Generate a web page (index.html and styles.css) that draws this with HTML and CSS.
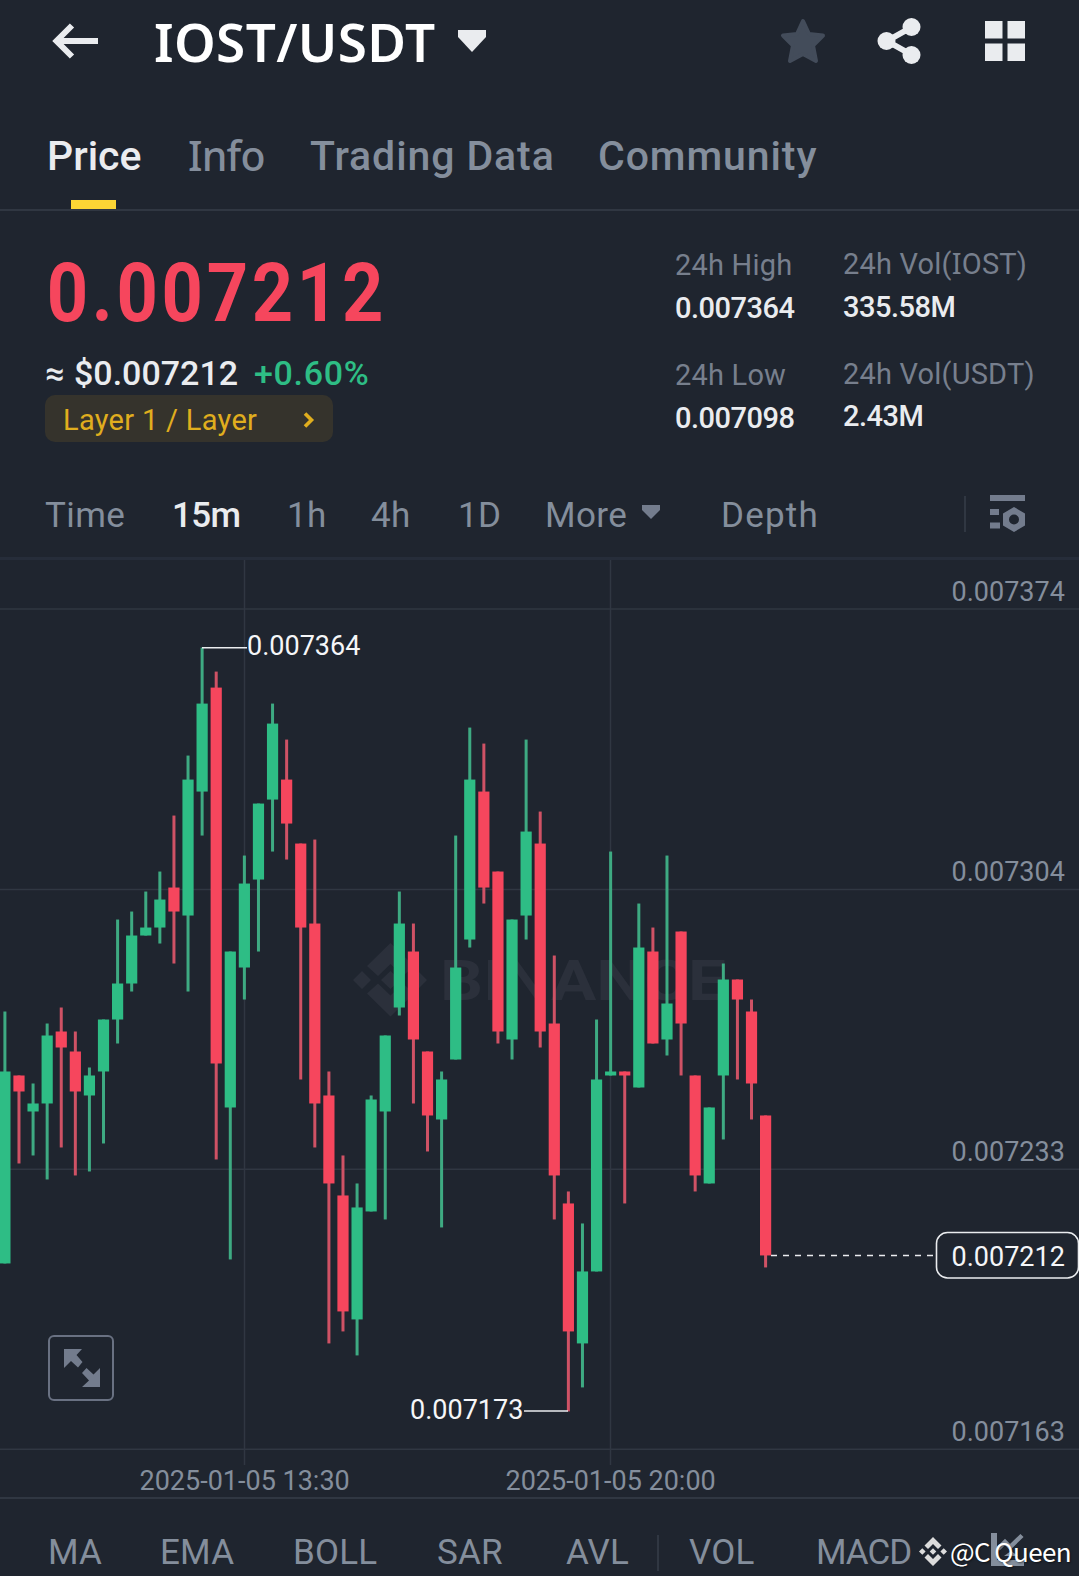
FILE: index.html
```html
<!DOCTYPE html>
<html lang="en">
<head>
    <meta charset="UTF-8">
    <meta name="viewport" content="width=device-width, initial-scale=1.0">
    <title>IOST/USDT</title>
    <link rel="stylesheet" href="styles.css">
</head>
<body>

<header class="topbar">
    <svg class="back" width="46" height="36" viewBox="0 0 46 36">
        <path d="M20 2.500L4.500 18L20 33.500M4.500 18H46" fill="none" stroke="#eaecef" stroke-width="6"/>
    </svg>
    <h1>IOST/USDT</h1>
    <svg class="pair-caret" width="28" height="22" viewBox="0 0 28 22">
        <path d="M0 0H28V7L14 22L0 7Z" fill="#eaecef"/>
    </svg>
    <div class="actions">
        <svg width="46" height="48" viewBox="0 0 46 48">
            <path d="M23 4L29 17L43 18.500L33 28.500L36 44L23 37L10 44L13 28.500L3 18.500L17 17Z" fill="#434c5a" stroke="#434c5a" stroke-width="4" stroke-linejoin="round"/>
        </svg>
        <svg width="44" height="48" viewBox="0 0 44 48">
            <path d="M35 10L10 24L35 38" fill="none" stroke="#eaecef" stroke-width="6"/>
            <circle cx="34.500" cy="10" r="9" fill="#eaecef"/>
            <circle cx="9.500" cy="24" r="9" fill="#eaecef"/>
            <circle cx="34.500" cy="38" r="9" fill="#eaecef"/>
        </svg>
        <svg width="40" height="40" viewBox="0 0 40 40">
            <path d="M0 0H17.500V17.500H0ZM22.500 0H40V17.500H22.500ZM0 22.500H17.500V40H0ZM22.500 22.500H40V40H22.500Z" fill="#eaecef"/>
        </svg>
    </div>
</header>

<nav class="tabs">
    <a class="active">Price</a>
    <a class="info">Info</a>
    <a>Trading Data</a>
    <a>Community</a>
</nav>

<!-- Ticker -->
<section class="ticker">
    <div class="quote">
        <div class="last-price">0.007212</div>
        <div class="fiat"><span class="approx">≈</span><span class="usd">$0.007212</span><span class="change">+0.60%</span></div>
        <div class="tag">
            <span>Layer 1 / Layer</span>
            <svg width="12" height="16" viewBox="0 0 12 16">
                <path d="M2 1.500L8.500 8L2 14.500" fill="none" stroke="#e0ae1e" stroke-width="3.600"/>
            </svg>
        </div>
    </div>
    <dl class="stats">
        <dt>24h High</dt>
        <dd>0.007364</dd>
        <dt>24h Low</dt>
        <dd>0.007098</dd>
    </dl>
    <dl class="stats volume">
        <dt>24h Vol(<span class="serif-i">I</span>OST)</dt>
        <dd>335.58M</dd>
        <dt>24h Vol(USDT)</dt>
        <dd>2.43M</dd>
    </dl>
</section>

<nav class="intervals">
    <span>Time</span>
    <span class="active">15m</span>
    <span>1h</span>
    <span>4h</span>
    <span>1D</span>
    <span>More</span>
    <svg class="more-caret" width="18" height="14" viewBox="0 0 18 14"><path d="M0 0H18V5L9 14L0 5Z"/></svg>
    <span class="depth">Depth</span>
    <i class="divider"></i>
    <svg width="36" height="37" viewBox="0 0 36 37">
        <path d="M0 0H35V6H0ZM0 14H9V20H0ZM0 27.500H10V33.500H0Z"/>
        <path fill-rule="evenodd" d="M24 12L35 18.500V30.500L24 37L13 30.500V18.500ZM24 19.500A5 5 0 1 0 24 29.500A5 5 0 1 0 24 19.500Z"/>
    </svg>
</nav>

<!-- Candlestick chart -->
<main class="chart">
    <svg width="1079" height="937" viewBox="0 0 1079 937">
        <g class="grid">
            <path d="M0 49H1079M0 329.400H1079M0 609.300H1079M0 889.300H1079"/>
            <path d="M244.500 0V905M610.500 0V905"/>
        </g>
        <g class="brand">
            <path d="M390.500 383L414 406L403 416L390.500 404L378 416L367 406ZM390.500 456.500L414 433.500L403 423.500L390.500 435.500L378 423.500L367 433.500ZM362 411L371 420L362 429L353 420ZM418 411L427 420L418 429L409 420ZM390.500 411L400 420L390.500 429L381 420Z"/>
            <text x="440" y="440" textLength="286" lengthAdjust="spacingAndGlyphs">BINANCE</text>
        </g>
        <g id="candles"></g>
        <g class="marker">
            <path d="M202 87.800H247M524 851H568"/>
            <path d="M771 695.500H936" stroke-dasharray="6 6"/>
            <rect x="936.500" y="672.500" width="142" height="45.500" rx="11"/>
            <text x="247" y="95">0.007364</text>
            <text x="410" y="859">0.007173</text>
            <text x="951.500" y="706">0.007212</text>
        </g>
        <g class="axis">
            <text x="951.500" y="40.500">0.007374</text>
            <text x="951.500" y="320.500">0.007304</text>
            <text x="951.500" y="600.500">0.007233</text>
            <text x="951.500" y="880.500">0.007163</text>
            <text x="139.500" y="930">2025-01-05 13:30</text>
            <text x="505.500" y="930">2025-01-05 20:00</text>
        </g>
    </svg>
    <button class="expand" aria-label="Full screen">
        <svg width="36" height="38" viewBox="0 0 36 38">
            <path d="M0 0H18L12.500 6L18.500 13L14 18.500L7 12L0 19ZM36 38H18L25 31.500L18 24L22.500 19L29.500 25.500L36 19Z" fill="#737c8d"/>
        </svg>
    </button>
</main>

<footer class="indicators">
    <span>MA</span>
    <span>EMA</span>
    <span>BOLL</span>
    <span>SAR</span>
    <span>AVL</span>
    <i class="divider"></i>
    <span>VOL</span>
    <span class="macd">MACD</span>
    <svg class="chart-icon" width="33" height="33" viewBox="0 0 33 33">
        <path d="M0 0H6V27H33V33H0Z"/>
        <path d="M7 16L14 9L19 14L31 2.500" fill="none" stroke="#848e9c" stroke-width="4.500"/>
        <path d="M13 23L20 18L27 23Z"/>
    </svg>
    <div class="author">
        <svg width="28" height="29" viewBox="0 0 28 29">
            <path d="M14 0L22.500 8.500L19 12L14 7L9 12L5.500 8.500ZM14 29L22.500 20.500L19 17L14 22L9 17L5.500 20.500ZM3.300 11.200L6.600 14.500L3.300 17.800L0 14.500ZM24.700 11.200L28 14.500L24.700 17.800L21.400 14.500ZM14 11.200L17.300 14.500L14 17.800L10.700 14.500Z" fill="#dcdcdc"/>
        </svg>
        <span>@C Queen</span>
    </div>
</footer>

<script>
// [direction, high, body top, body bottom, low] in ticks below the 0.007364 high
const candles = [
    ['up', 91, 106, 154, 154], ['down', 107, 107, 111, 129], ['up', 109, 114, 116, 127],
    ['up', 94, 97, 114, 133], ['down', 90, 96, 100, 125], ['down', 96, 101, 111, 132],
    ['up', 105, 107, 112, 131], ['up', 93, 93, 106, 124], ['up', 68, 84, 93, 99],
    ['up', 66, 72, 84, 86], ['up', 61, 70, 72, 72], ['up', 56, 63, 70, 74],
    ['down', 42, 60, 66, 79], ['up', 27, 33, 67, 86], ['up', 0, 14, 36, 47],
    ['down', 6, 10, 104, 128], ['up', 76, 76, 115, 153], ['up', 52, 59, 80, 88],
    ['up', 39, 39, 58, 76], ['up', 14, 19, 38, 51], ['down', 23, 33, 44, 53],
    ['down', 49, 49, 70, 108], ['down', 48, 69, 114, 125], ['down', 106, 112, 134, 174],
    ['down', 127, 137, 166, 171], ['up', 134, 140, 168, 177], ['up', 112, 113, 141, 141],
    ['up', 97, 97, 116, 143], ['up', 61, 69, 90, 92], ['down', 69, 76, 98, 114],
    ['down', 101, 101, 117, 126], ['up', 106, 108, 118, 145], ['up', 47, 80, 103, 103],
    ['up', 20, 33, 73, 75], ['down', 24, 36, 60, 64], ['down', 56, 56, 96, 99],
    ['up', 68, 68, 98, 103], ['up', 23, 46, 67, 73], ['down', 41, 49, 96, 100],
    ['down', 77, 94, 132, 143], ['down', 136, 139, 171, 191], ['up', 144, 156, 174, 185],
    ['up', 93, 108, 156, 156], ['up', 51, 106, 107, 107], ['down', 106, 106, 107, 139],
    ['up', 64, 75, 110, 110], ['down', 70, 76, 99, 99], ['up', 52, 89, 98, 102],
    ['down', 71, 71, 94, 107], ['down', 107, 107, 132, 136], ['up', 115, 115, 134, 134],
    ['up', 79, 83, 107, 123], ['down', 83, 83, 88, 108], ['down', 88, 91, 109, 118],
    ['down', 117, 117, 152, 155]
];

const tick = 3.999;
const top0 = 87.6;
const step = 14.087;

let shapes = '';
candles.forEach(([dir, high, top, bottom, low], i) => {
    const x = 4.9 + i * step;
    shapes += `<rect class="wick ${dir}" x="${x - 1.5}" y="${top0 + high * tick}" width="3" height="${(low - high) * tick}"/>`;
    shapes += `<rect class="${dir}" x="${x - 5.6}" y="${top0 + top * tick}" width="11.2" height="${(bottom - top) * tick}"/>`;
});
document.getElementById('candles').innerHTML = shapes;
</script>

</body>
</html>
```
FILE: styles.css
```css
* {
    box-sizing: border-box;
}

body {
    margin: 0;
    width: 1079px;
    height: 1576px;
    overflow: hidden;
    background-color: #1f252f;
    color: #eaecef;
    font-family: Roboto, "Noto Sans", sans-serif;
}

svg {
    display: block;
    flex: none;
}

.topbar {
    display: flex;
    align-items: center;
    height: 84px;
    padding: 0 54px 2px 52px;
}

.topbar h1 {
    width: 281px;
    margin: 1px 0 0 56px;
    font-family: "Noto Sans", sans-serif;
    font-size: 53px;
    font-weight: 600;
    line-height: 60px;
    letter-spacing: 0.4px;
    color: #fff;
    white-space: nowrap;
}

.pair-caret {
    margin-left: 23px;
}

.actions {
    display: flex;
    align-items: center;
    margin-left: auto;
}

.actions svg:nth-child(2) {
    margin: 0 64px 0 51px;
}

.tabs {
    display: grid;
    grid-template-columns: 141px 122px 288px auto;
    height: 127px;
    padding: 48px 0 0 47px;
    border-bottom: 2px solid #303742;
    font-size: 41px;
    font-weight: 500;
    line-height: 48px;
    color: #848e9c;
}

.tabs a {
    letter-spacing: 0.9px;
}

.tabs .info {
    margin-top: -1px;
    font-family: "Noto Sans", sans-serif;
    letter-spacing: -0.8px;
}

.tabs .active {
    display: flex;
    flex-direction: column;
    color: #eaecef;
    letter-spacing: 0;
}

.tabs .active::after {
    content: "";
    width: 45px;
    height: 9px;
    margin: 20px 0 0 24px;
    background-color: #fcd535;
}

.ticker {
    display: grid;
    grid-template-columns: 630px 168px auto;
    height: 258px;
    padding-left: 45px;
}

.quote {
    padding-top: 31px;
}

/* condensed digits */
.last-price {
    height: 98px;
    padding: 2px 0 0 2px;
    font-size: 82px;
    font-weight: 700;
    line-height: 98px;
    letter-spacing: 4.2px;
    color: #f6465d;
    transform: scaleX(0.88);
    transform-origin: left;
}

.fiat {
    display: flex;
    height: 55px;
    padding-top: 12px;
    font-size: 34px;
    font-weight: 500;
    line-height: 42px;
}

.approx {
    width: 29px;
}

.usd {
    width: 180px;
}

.change {
    color: #2ebd85;
    letter-spacing: 0.7px;
}

.tag {
    display: flex;
    align-items: center;
    justify-content: space-between;
    width: 288px;
    height: 47px;
    padding: 2px 18px 0 18px;
    border-radius: 10px;
    background-color: #35332c;
    color: #e0ae1e;
    font-size: 29px;
    letter-spacing: 0.3px;
}

.stats {
    margin: 0;
    padding-top: 37px;
    font-size: 29px;
    line-height: 34px;
}

.stats.volume {
    padding-top: 36px;
}

.stats dt {
    margin-bottom: 9px;
    color: #777f8d;
    letter-spacing: 0.2px;
}

.serif-i {
    font-family: "Noto Sans", sans-serif;
    line-height: 1;
}

.stats dd {
    margin: 0 0 33px;
    font-weight: 500;
    letter-spacing: -0.5px;
}

.stats.volume dt {
    margin-bottom: 8px;
}

.stats.volume dt:first-child {
    margin-bottom: 9px;
}

.intervals {
    display: grid;
    grid-template-columns: 127px 115px 84px 87px 87px 97px 79px 243px 26px auto;
    align-items: center;
    height: 91px;
    padding: 1px 0 0 45px;
    border-bottom: 3px solid #262d3a;
    font-size: 35px;
    letter-spacing: 0.4px;
    color: #848e9c;
}

.intervals span {
    padding-top: 3px;
}

.intervals .active {
    color: #eaecef;
    font-weight: 500;
    letter-spacing: -0.6px;
}

.intervals .depth {
    letter-spacing: 1.2px;
}

.intervals svg {
    fill: #737c8d;
}

.intervals .more-caret {
    margin-bottom: 4px;
}

.divider {
    width: 2px;
    height: 36px;
    background-color: #303742;
}

.chart {
    position: relative;
    height: 939px;
    border-bottom: 2px solid #303742;
}

.chart text {
    font-size: 27px;
}

.grid {
    fill: none;
    stroke: #303742;
    stroke-width: 1.5;
}

.chart .brand {
    fill: #2b303b;
}

.chart .brand text {
    font-size: 56px;
    font-weight: 700;
}

.up {
    fill: #2ebd85;
}

.down {
    fill: #f6465d;
}

.wick.up {
    fill: #3eaa82;
}

.wick.down {
    fill: #cf5265;
}

.marker path,
.marker rect {
    fill: none;
    stroke: #eaecef;
    stroke-width: 1.6;
}

.marker text {
    fill: #f5f6f8;
}

.axis {
    fill: #848e9c;
}

.expand {
    position: absolute;
    left: 48px;
    bottom: 96px;
    width: 66px;
    height: 66px;
    padding: 0 0 0 14px;
    border: 2px solid #697182;
    border-radius: 6px;
    background: none;
}

.indicators {
    position: relative;
    display: grid;
    grid-template-columns: 112px 133px 144px 129px 91px 32px 127px 175px auto;
    align-items: center;
    height: 78px;
    padding: 29px 0 0 48px;
    font-size: 35px;
    letter-spacing: 0.2px;
    color: #848e9c;
}

.indicators .macd {
    letter-spacing: -1px;
}

.chart-icon {
    margin-bottom: 7px;
    fill: #848e9c;
}

/* signature sits over the indicator row */
.author {
    position: absolute;
    right: 8px;
    bottom: 6px;
    display: flex;
    align-items: center;
    gap: 3px;
    color: #fff;
    font-family: "Noto Sans CJK SC", sans-serif;
    font-size: 26px;
    font-weight: 400;
    line-height: 40px;
    letter-spacing: -0.6px;
    word-spacing: -1px;
    text-shadow: 1px 1px 2px rgba(0, 0, 0, 0.5);
}
```
